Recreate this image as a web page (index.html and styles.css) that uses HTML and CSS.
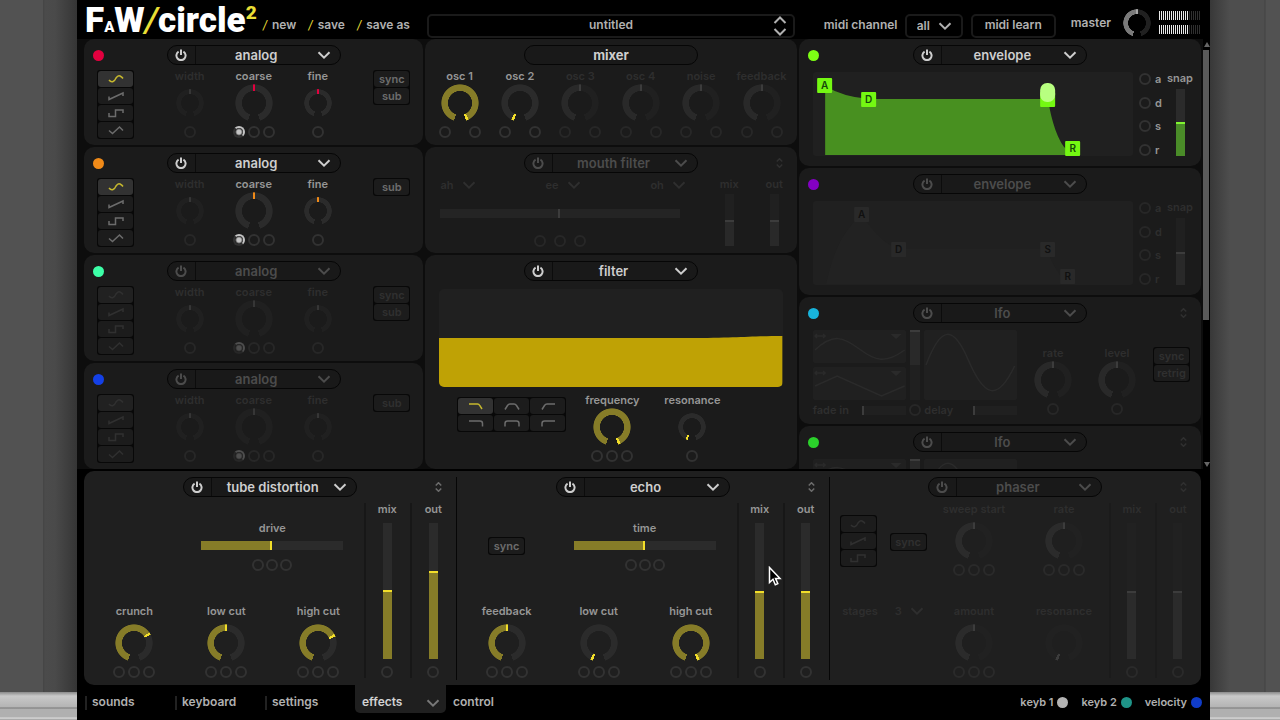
FILE: index.html
```html
<!DOCTYPE html>
<html lang="en">
<head>
    <meta charset="UTF-8">
    <meta name="viewport" content="width=device-width, initial-scale=1.0">
    <title>FAW / circle2</title>
    <link rel="stylesheet" href="styles.css">
</head>
<body>
    <!-- shared icons -->
    <svg class="sprite" aria-hidden="true">
        <symbol id="power" viewBox="0 0 12 12"><path d="M3.6 2.6a4.6 4.6 0 1 0 4.8 0M6 0.5v5.5"/></symbol>
        <symbol id="chevron" viewBox="0 0 14 8"><path d="M1.5 1.2L7 6.6l5.5-5.4"/></symbol>
        <symbol id="updown" viewBox="0 0 14 20"><path d="M1.5 7L7 1.5 12.5 7M1.5 13L7 18.5 12.5 13"/></symbol>
        <symbol id="sine" viewBox="0 0 16 10"><path d="M1 6q2 2.500 4 1.500t3-3.500q2-3 4-2t3 2.500"/></symbol>
        <symbol id="saw" viewBox="0 0 16 10"><path d="M1 5.500v3L15 2v3"/></symbol>
        <symbol id="square" viewBox="0 0 16 10"><path d="M1 5v3.500h6.500V2H15v3"/></symbol>
        <symbol id="tri" viewBox="0 0 16 10"><path d="M1 5.500L4.500 8.500 11.500 2 15 5.500"/></symbol>
        <symbol id="lp" viewBox="0 0 16 10"><path d="M1 3h8.500q1.500 0 2.200 1.500L14 8"/></symbol>
        <symbol id="bp" viewBox="0 0 16 10"><path d="M1 8.500l2.500-4Q4.500 3 6 3h4q1.500 0 2.500 1.500l2.500 4"/></symbol>
        <symbol id="hp" viewBox="0 0 16 10"><path d="M2 8.500l2.500-4Q5.500 3 7 3h8"/></symbol>
        <symbol id="lp4" viewBox="0 0 16 10"><path d="M1 3h11q2.500 0 2.500 2.500v3"/></symbol>
        <symbol id="bp4" viewBox="0 0 16 10"><path d="M1 8.500v-3Q1 3 3.500 3h9q2.500 0 2.500 2.500v3"/></symbol>
        <symbol id="hp4" viewBox="0 0 16 10"><path d="M2 8.500v-3Q2 3 4.500 3H15"/></symbol>
    </svg>

    <div class="window">
        <header class="topbar">
            <div class="brand">
                <h1 class="logo">F<span class="logo-a">A</span>W<i>/</i>circle<sup>2</sup></h1>
                <nav class="file-menu">
                    <a href="#new"><i>/</i>new</a>
                    <a href="#save"><i>/</i>save</a>
                    <a href="#save-as"><i>/</i>save as</a>
                </nav>
            </div>
            <div class="preset">
                <select aria-label="preset"><option>untitled</option></select>
                <svg class="preset-arrows"><use href="#updown"/></svg>
            </div>
            <div class="midi">
                <label class="midi-label" for="midi-channel">midi channel</label>
                <div class="box channel">
                    <select id="midi-channel"><option>all</option></select>
                    <svg class="chevron"><use href="#chevron"/></svg>
                </div>
                <button class="box">midi learn</button>
                <label class="master">master <input type="range" class="dial small grey" value="50" style="--v: 50"></label>
                <div class="meters">
                    <div class="meter" style="--v: 69"></div>
                    <div class="meter" style="--v: 69"></div>
                </div>
            </div>
        </header>

        <main class="rack">
            <div class="column">
                <section class="panel osc" style="--accent: #e3003f">
                    <div class="panel-head">
                        <span class="dot"></span>
                        <div class="pill">
                            <button class="power" aria-label="power"><svg><use href="#power"/></svg></button>
                            <select aria-label="oscillator 1 type"><option>analog</option></select>
                            <svg class="chevron"><use href="#chevron"/></svg>
                        </div>
                    </div>
                    <div class="osc-body">
                        <div class="cells">
                            <button class="cell on" aria-label="sine"><svg><use href="#sine"/></svg></button>
                            <button class="cell" aria-label="saw"><svg><use href="#saw"/></svg></button>
                            <button class="cell" aria-label="square"><svg><use href="#square"/></svg></button>
                            <button class="cell" aria-label="triangle"><svg><use href="#tri"/></svg></button>
                        </div>
                        <div class="knobs">
                            <div class="knob off"><label>width<input type="range" class="dial small bipolar" value="50" style="--v: 50"></label>
                                <div class="slots"><button class="slot"></button></div></div>
                            <div class="knob"><label>coarse<input type="range" class="dial bipolar" value="50" style="--v: 50"></label>
                                <div class="slots"><button class="slot linked"></button><button class="slot"></button><button class="slot"></button></div></div>
                            <div class="knob"><label>fine<input type="range" class="dial small bipolar" value="50" style="--v: 50"></label>
                                <div class="slots"><button class="slot"></button></div></div>
                        </div>
                        <div class="cells"><button class="cell">sync</button><button class="cell">sub</button></div>
                    </div>
                </section>

                <section class="panel osc" style="--accent: #f08a18">
                    <div class="panel-head">
                        <span class="dot"></span>
                        <div class="pill">
                            <button class="power" aria-label="power"><svg><use href="#power"/></svg></button>
                            <select aria-label="oscillator 2 type"><option>analog</option></select>
                            <svg class="chevron"><use href="#chevron"/></svg>
                        </div>
                    </div>
                    <div class="osc-body">
                        <div class="cells">
                            <button class="cell on" aria-label="sine"><svg><use href="#sine"/></svg></button>
                            <button class="cell" aria-label="saw"><svg><use href="#saw"/></svg></button>
                            <button class="cell" aria-label="square"><svg><use href="#square"/></svg></button>
                            <button class="cell" aria-label="triangle"><svg><use href="#tri"/></svg></button>
                        </div>
                        <div class="knobs">
                            <div class="knob off"><label>width<input type="range" class="dial small bipolar" value="50" style="--v: 50"></label>
                                <div class="slots"><button class="slot"></button></div></div>
                            <div class="knob"><label>coarse<input type="range" class="dial bipolar" value="50" style="--v: 50"></label>
                                <div class="slots"><button class="slot linked"></button><button class="slot"></button><button class="slot"></button></div></div>
                            <div class="knob"><label>fine<input type="range" class="dial small bipolar" value="50" style="--v: 50"></label>
                                <div class="slots"><button class="slot"></button></div></div>
                        </div>
                        <div class="cells"><button class="cell">sub</button></div>
                    </div>
                </section>

                <section class="panel osc off" style="--accent: #3dffa8">
                    <div class="panel-head">
                        <span class="dot"></span>
                        <div class="pill">
                            <button class="power" aria-label="power"><svg><use href="#power"/></svg></button>
                            <select aria-label="oscillator 3 type"><option>analog</option></select>
                            <svg class="chevron"><use href="#chevron"/></svg>
                        </div>
                    </div>
                    <div class="osc-body">
                        <div class="cells">
                            <button class="cell on" aria-label="sine"><svg><use href="#sine"/></svg></button>
                            <button class="cell" aria-label="saw"><svg><use href="#saw"/></svg></button>
                            <button class="cell" aria-label="square"><svg><use href="#square"/></svg></button>
                            <button class="cell" aria-label="triangle"><svg><use href="#tri"/></svg></button>
                        </div>
                        <div class="knobs">
                            <div class="knob"><label>width<input type="range" class="dial small bipolar" value="50" style="--v: 50"></label>
                                <div class="slots"><button class="slot"></button></div></div>
                            <div class="knob"><label>coarse<input type="range" class="dial bipolar" value="50" style="--v: 50"></label>
                                <div class="slots"><button class="slot linked"></button><button class="slot"></button><button class="slot"></button></div></div>
                            <div class="knob"><label>fine<input type="range" class="dial small bipolar" value="50" style="--v: 50"></label>
                                <div class="slots"><button class="slot"></button></div></div>
                        </div>
                        <div class="cells"><button class="cell">sync</button><button class="cell">sub</button></div>
                    </div>
                </section>

                <section class="panel osc off" style="--accent: #1440e6">
                    <div class="panel-head">
                        <span class="dot"></span>
                        <div class="pill">
                            <button class="power" aria-label="power"><svg><use href="#power"/></svg></button>
                            <select aria-label="oscillator 4 type"><option>analog</option></select>
                            <svg class="chevron"><use href="#chevron"/></svg>
                        </div>
                    </div>
                    <div class="osc-body">
                        <div class="cells">
                            <button class="cell on" aria-label="sine"><svg><use href="#sine"/></svg></button>
                            <button class="cell" aria-label="saw"><svg><use href="#saw"/></svg></button>
                            <button class="cell" aria-label="square"><svg><use href="#square"/></svg></button>
                            <button class="cell" aria-label="triangle"><svg><use href="#tri"/></svg></button>
                        </div>
                        <div class="knobs">
                            <div class="knob"><label>width<input type="range" class="dial small bipolar" value="50" style="--v: 50"></label>
                                <div class="slots"><button class="slot"></button></div></div>
                            <div class="knob"><label>coarse<input type="range" class="dial bipolar" value="50" style="--v: 50"></label>
                                <div class="slots"><button class="slot linked"></button><button class="slot"></button><button class="slot"></button></div></div>
                            <div class="knob"><label>fine<input type="range" class="dial small bipolar" value="50" style="--v: 50"></label>
                                <div class="slots"><button class="slot"></button></div></div>
                        </div>
                        <div class="cells"><button class="cell">sub</button></div>
                    </div>
                </section>
            </div>

            <div class="column">
                <section class="panel">
                    <div class="panel-head"><h2 class="pill">mixer</h2></div>
                    <div class="mixer-body">
                        <div class="knob"><label>osc 1<input type="range" class="dial" value="100" style="--v: 100"></label>
                            <div class="slots wide"><button class="slot"></button><button class="slot"></button></div></div>
                        <div class="knob"><label>osc 2<input type="range" class="dial" value="0" style="--v: 0"></label>
                            <div class="slots wide"><button class="slot"></button><button class="slot"></button></div></div>
                        <div class="knob off"><label>osc 3<input type="range" class="dial" value="50" style="--v: 50"></label>
                            <div class="slots wide"><button class="slot"></button><button class="slot"></button></div></div>
                        <div class="knob off"><label>osc 4<input type="range" class="dial" value="50" style="--v: 50"></label>
                            <div class="slots wide"><button class="slot"></button><button class="slot"></button></div></div>
                        <div class="knob off"><label>noise<input type="range" class="dial" value="50" style="--v: 50"></label>
                            <div class="slots wide"><button class="slot"></button><button class="slot"></button></div></div>
                        <div class="knob off"><label>feedback<input type="range" class="dial" value="50" style="--v: 50"></label>
                            <div class="slots wide"><button class="slot"></button><button class="slot"></button></div></div>
                    </div>
                </section>

                <section class="panel off">
                    <div class="panel-head">
                        <div class="pill">
                            <button class="power" aria-label="power"><svg><use href="#power"/></svg></button>
                            <select aria-label="slot module"><option>mouth filter</option></select>
                            <svg class="chevron"><use href="#chevron"/></svg>
                        </div>
                        <button class="step" aria-label="previous or next"><svg><use href="#updown"/></svg></button>
                    </div>
                    <div class="mouth-body">
                        <div class="mouth-main">
                            <div class="vowels">
                                <div class="pick"><select aria-label="vowel 1"><option>ah</option></select><svg class="chevron"><use href="#chevron"/></svg></div>
                                <div class="pick"><select aria-label="vowel 2"><option>ee</option></select><svg class="chevron"><use href="#chevron"/></svg></div>
                                <div class="pick"><select aria-label="vowel 3"><option>oh</option></select><svg class="chevron"><use href="#chevron"/></svg></div>
                            </div>
                            <input type="range" class="bar plain" aria-label="vowel position" value="50" style="--v: 50">
                            <div class="slots spaced"><button class="slot"></button><button class="slot"></button><button class="slot"></button></div>
                        </div>
                        <label class="fader">mix<input type="range" class="vbar" value="50" style="--v: 50"></label>
                        <label class="fader">out<input type="range" class="vbar" value="50" style="--v: 50"></label>
                    </div>
                </section>

                <section class="panel grow">
                    <div class="panel-head">
                        <div class="pill">
                            <button class="power" aria-label="power"><svg><use href="#power"/></svg></button>
                            <select aria-label="filter module"><option>filter</option></select>
                            <svg class="chevron"><use href="#chevron"/></svg>
                        </div>
                    </div>
                    <div class="filter-body">
                        <svg class="response" viewBox="0 0 345 98" preserveAspectRatio="none">
                            <path d="M0 49H250C300 49 310 47 345 47V98H0z"/>
                        </svg>
                        <div class="filter-controls">
                            <div class="cells filter-types">
                                <button class="cell on" aria-label="low pass 12"><svg><use href="#lp"/></svg></button>
                                <button class="cell" aria-label="band pass 12"><svg><use href="#bp"/></svg></button>
                                <button class="cell" aria-label="high pass 12"><svg><use href="#hp"/></svg></button>
                                <button class="cell" aria-label="low pass 24"><svg><use href="#lp4"/></svg></button>
                                <button class="cell" aria-label="band pass 24"><svg><use href="#bp4"/></svg></button>
                                <button class="cell" aria-label="high pass 24"><svg><use href="#hp4"/></svg></button>
                            </div>
                            <div class="knob"><label>frequency<input type="range" class="dial" value="100" style="--v: 100"></label>
                                <div class="slots"><button class="slot"></button><button class="slot"></button><button class="slot"></button></div></div>
                            <div class="knob"><label>resonance<input type="range" class="dial small" value="0" style="--v: 0"></label>
                                <div class="slots"><button class="slot"></button></div></div>
                        </div>
                    </div>
                </section>
            </div>

            <div class="column modulators">
                <section class="panel mod" style="--accent: #7dff14">
                    <div class="panel-head">
                        <span class="dot"></span>
                        <div class="pill">
                            <button class="power" aria-label="power"><svg><use href="#power"/></svg></button>
                            <select aria-label="modulator 1 type"><option>envelope</option></select>
                            <svg class="chevron"><use href="#chevron"/></svg>
                        </div>
                    </div>
                    <div class="env-body">
                        <svg class="env-graph" viewBox="0 0 320 84">
                            <path class="env-area" d="M12 14Q30 25 56 27H235C238 50 246 70 252 76L259 83H12z"/>
                            <rect class="handle" x="4" y="6" width="15" height="15" rx="1"/><text x="11.5" y="17">A</text>
                            <rect class="handle" x="48" y="20" width="15" height="15" rx="1"/><text x="55.5" y="31">D</text>
                            <rect class="handle" x="227" y="20" width="15" height="15" rx="1"/>
                            <rect class="glow" x="227" y="11" width="15" height="19" rx="7"/>
                            <rect class="handle" x="252" y="69" width="15" height="15" rx="1"/><text x="259.5" y="80">R</text>
                        </svg>
                        <div class="stages">
                            <label><button class="slot"></button>a</label>
                            <label><button class="slot"></button>d</label>
                            <label><button class="slot"></button>s</label>
                            <label><button class="slot"></button>r</label>
                        </div>
                        <label class="fader snap">snap<input type="range" class="vbar" value="51" style="--v: 51"></label>
                    </div>
                </section>

                <section class="panel mod off" style="--accent: #8400c4">
                    <div class="panel-head">
                        <span class="dot"></span>
                        <div class="pill">
                            <button class="power" aria-label="power"><svg><use href="#power"/></svg></button>
                            <select aria-label="modulator 2 type"><option>envelope</option></select>
                            <svg class="chevron"><use href="#chevron"/></svg>
                        </div>
                    </div>
                    <div class="env-body">
                        <svg class="env-graph" viewBox="0 0 320 84">
                            <path class="env-area" d="M13 83C20 50 30 30 48 14 58 26 68 42 85 48H234Q240 68 254 83z"/>
                            <rect class="handle" x="41" y="6" width="15" height="15" rx="1"/><text x="48.5" y="17">A</text>
                            <rect class="handle" x="78" y="41" width="15" height="15" rx="1"/><text x="85.5" y="52">D</text>
                            <rect class="handle" x="227" y="41" width="15" height="15" rx="1"/><text x="234.5" y="52">S</text>
                            <rect class="handle" x="247" y="68" width="15" height="15" rx="1"/><text x="254.5" y="79">R</text>
                        </svg>
                        <div class="stages">
                            <label><button class="slot"></button>a</label>
                            <label><button class="slot"></button>d</label>
                            <label><button class="slot"></button>s</label>
                            <label><button class="slot"></button>r</label>
                        </div>
                        <label class="fader snap">snap<input type="range" class="vbar" value="50" style="--v: 50"></label>
                    </div>
                </section>

                <section class="panel mod off" style="--accent: #18b4dc">
                    <div class="panel-head">
                        <span class="dot"></span>
                        <div class="pill">
                            <button class="power" aria-label="power"><svg><use href="#power"/></svg></button>
                            <select aria-label="modulator 3 type"><option>lfo</option></select>
                            <svg class="chevron"><use href="#chevron"/></svg>
                        </div>
                        <button class="step" aria-label="previous or next"><svg><use href="#updown"/></svg></button>
                    </div>
                    <div class="lfo-body">
                        <div class="lfo-waves">
                            <div class="wave-pair">
                                <svg viewBox="0 0 93 33" preserveAspectRatio="none"><path d="M2 20C20 3 30 7 46 19S72 34 91 20M2 6h10M4 4L2 6l2 2M10 4l2 2-2 2"/><path class="solid" d="M77 4h11l-5.5 5z"/></svg>
                                <svg viewBox="0 0 93 33" preserveAspectRatio="none"><path d="M2 19L24 9 68 29 91 19M2 6h10M4 4L2 6l2 2M10 4l2 2-2 2"/><path class="solid" d="M77 4h11l-5.5 5z"/></svg>
                            </div>
                            <input type="range" class="vbar down" aria-label="wave blend" value="50" style="--v: 50">
                            <svg class="lfo-shape" viewBox="0 0 92 70" preserveAspectRatio="none"><path d="M2 35C17-5 29-5 44 30S72 74 90 36"/></svg>
                            <label class="lfo-bar">fade in<input type="range" class="bar" value="4" style="--v: 4"></label>
                            <button class="slot" aria-label="fade modulation"></button>
                            <label class="lfo-bar">delay<input type="range" class="bar" value="4" style="--v: 4"></label>
                        </div>
                        <div class="knob"><label>rate<input type="range" class="dial" value="50" style="--v: 50"></label>
                            <div class="slots"><button class="slot"></button></div></div>
                        <div class="knob"><label>level<input type="range" class="dial" value="50" style="--v: 50"></label>
                            <div class="slots"><button class="slot"></button></div></div>
                        <div class="cells"><button class="cell">sync</button><button class="cell">retrig</button></div>
                    </div>
                </section>

                <section class="panel mod off" style="--accent: #2bd12b">
                    <div class="panel-head">
                        <span class="dot"></span>
                        <div class="pill">
                            <button class="power" aria-label="power"><svg><use href="#power"/></svg></button>
                            <select aria-label="modulator 4 type"><option>lfo</option></select>
                            <svg class="chevron"><use href="#chevron"/></svg>
                        </div>
                        <button class="step" aria-label="previous or next"><svg><use href="#updown"/></svg></button>
                    </div>
                    <div class="lfo-body collapsed">
                        <div class="lfo-waves">
                            <div class="wave-pair">
                                <svg viewBox="0 0 93 33" preserveAspectRatio="none"><path d="M2 20C20 3 30 7 46 19S72 34 91 20M2 6h10M4 4L2 6l2 2M10 4l2 2-2 2"/><path class="solid" d="M77 4h11l-5.5 5z"/></svg>
                                <svg viewBox="0 0 93 33" preserveAspectRatio="none"><path d="M2 19L24 9 68 29 91 19"/></svg>
                            </div>
                            <input type="range" class="vbar down" aria-label="wave blend" value="50" style="--v: 50">
                            <svg class="lfo-shape" viewBox="0 0 92 70" preserveAspectRatio="none"><path d="M2 35C17-5 29-5 44 30S72 74 90 36"/></svg>
                        </div>
                    </div>
                </section>
            </div>

            <div class="scrollbar">
                <svg viewBox="0 0 6 5"><path d="M3 0l3 5H0z"/></svg>
                <div class="scroll-track"><div class="scroll-thumb" style="height: 66%"></div></div>
                <svg viewBox="0 0 6 5"><path d="M0 0h6L3 5z"/></svg>
            </div>
        </main>

        <section class="effects">
            <div class="effect">
                <div class="panel-head">
                    <div class="pill">
                        <button class="power" aria-label="power"><svg><use href="#power"/></svg></button>
                        <select aria-label="effect 1"><option>tube distortion</option></select>
                        <svg class="chevron"><use href="#chevron"/></svg>
                    </div>
                    <button class="step" aria-label="previous or next"><svg><use href="#updown"/></svg></button>
                </div>
                <div class="effect-body">
                    <div class="effect-main">
                        <div class="effect-slider">
                            <label>drive<input type="range" class="bar" value="50" style="--v: 50"></label>
                            <div class="slots"><button class="slot"></button><button class="slot"></button><button class="slot"></button></div>
                        </div>
                        <div class="knob first"><label>crunch<input type="range" class="dial" value="69" style="--v: 69"></label>
                            <div class="slots"><button class="slot"></button><button class="slot"></button><button class="slot"></button></div></div>
                        <div class="knob"><label>low cut<input type="range" class="dial" value="50" style="--v: 50"></label>
                            <div class="slots"><button class="slot"></button><button class="slot"></button><button class="slot"></button></div></div>
                        <div class="knob"><label>high cut<input type="range" class="dial" value="71" style="--v: 71"></label>
                            <div class="slots"><button class="slot"></button><button class="slot"></button><button class="slot"></button></div></div>
                    </div>
                    <div class="effect-fader"><label class="fader">mix<input type="range" class="vbar" value="51" style="--v: 51"></label><button class="slot"></button></div>
                    <div class="effect-fader"><label class="fader">out<input type="range" class="vbar" value="65" style="--v: 65"></label><button class="slot"></button></div>
                </div>
            </div>

            <div class="effect">
                <div class="panel-head">
                    <div class="pill">
                        <button class="power" aria-label="power"><svg><use href="#power"/></svg></button>
                        <select aria-label="effect 2"><option>echo</option></select>
                        <svg class="chevron"><use href="#chevron"/></svg>
                    </div>
                    <button class="step" aria-label="previous or next"><svg><use href="#updown"/></svg></button>
                </div>
                <div class="effect-body">
                    <div class="effect-main">
                        <div class="cells"><button class="cell">sync</button></div>
                        <div class="effect-slider">
                            <label>time<input type="range" class="bar" value="50" style="--v: 50"></label>
                            <div class="slots"><button class="slot"></button><button class="slot"></button><button class="slot"></button></div>
                        </div>
                        <div class="knob first"><label>feedback<input type="range" class="dial" value="50" style="--v: 50"></label>
                            <div class="slots"><button class="slot"></button><button class="slot"></button><button class="slot"></button></div></div>
                        <div class="knob"><label>low cut<input type="range" class="dial" value="0" style="--v: 0"></label>
                            <div class="slots"><button class="slot"></button><button class="slot"></button><button class="slot"></button></div></div>
                        <div class="knob"><label>high cut<input type="range" class="dial" value="100" style="--v: 100"></label>
                            <div class="slots"><button class="slot"></button><button class="slot"></button><button class="slot"></button></div></div>
                    </div>
                    <div class="effect-fader"><label class="fader">mix<input type="range" class="vbar" value="50" style="--v: 50"></label><button class="slot"></button></div>
                    <div class="effect-fader"><label class="fader">out<input type="range" class="vbar" value="50" style="--v: 50"></label><button class="slot"></button></div>
                </div>
            </div>

            <div class="effect off">
                <div class="panel-head">
                    <div class="pill">
                        <button class="power" aria-label="power"><svg><use href="#power"/></svg></button>
                        <select aria-label="effect 3"><option>phaser</option></select>
                        <svg class="chevron"><use href="#chevron"/></svg>
                    </div>
                    <button class="step" aria-label="previous or next"><svg><use href="#updown"/></svg></button>
                </div>
                <div class="effect-body">
                    <div class="effect-main phaser">
                        <div class="phaser-switches">
                            <div class="cells">
                                <button class="cell" aria-label="sine"><svg><use href="#sine"/></svg></button>
                                <button class="cell" aria-label="saw"><svg><use href="#saw"/></svg></button>
                                <button class="cell" aria-label="square"><svg><use href="#square"/></svg></button>
                            </div>
                            <div class="cells"><button class="cell">sync</button></div>
                        </div>
                        <div class="knob"><label>sweep start<input type="range" class="dial" value="50" style="--v: 50"></label>
                            <div class="slots"><button class="slot"></button><button class="slot"></button><button class="slot"></button></div></div>
                        <div class="knob"><label>rate<input type="range" class="dial" value="50" style="--v: 50"></label>
                            <div class="slots"><button class="slot"></button><button class="slot"></button><button class="slot"></button></div></div>
                        <div class="phaser-stages">
                            <label for="stages">stages</label>
                            <div class="pick"><select id="stages"><option>3</option></select><svg class="chevron"><use href="#chevron"/></svg></div>
                        </div>
                        <div class="knob"><label>amount<input type="range" class="dial" value="50" style="--v: 50"></label>
                            <div class="slots"><button class="slot"></button><button class="slot"></button><button class="slot"></button></div></div>
                        <div class="knob"><label>resonance<input type="range" class="dial" value="0" style="--v: 0"></label></div>
                    </div>
                    <div class="effect-fader"><label class="fader">mix<input type="range" class="vbar" value="50" style="--v: 50"></label><button class="slot"></button></div>
                    <div class="effect-fader"><label class="fader">out<input type="range" class="vbar" value="50" style="--v: 50"></label><button class="slot"></button></div>
                </div>
            </div>
        </section>

        <footer class="bottombar">
            <nav class="tabs">
                <a href="#sounds">sounds</a>
                <a href="#keyboard">keyboard</a>
                <a href="#settings">settings</a>
                <a href="#effects" class="active">effects <svg class="chevron"><use href="#chevron"/></svg></a>
                <a href="#control">control</a>
            </nav>
            <div class="sources">
                <span>keyb 1 <b class="dot" style="--accent: #b4b4b4"></b></span>
                <span>keyb 2 <b class="dot" style="--accent: #1f9488"></b></span>
                <span>velocity <b class="dot" style="--accent: #103cc8"></b></span>
            </div>
        </footer>

        <svg class="cursor" viewBox="0 0 14 20"><path d="M1.5 1.5v15l3.5-3.2 2.3 5.4 2.5-1.1-2.3-5.2H12z"/></svg>
    </div>
</body>
</html>
```
FILE: styles.css
```css
* {
    box-sizing: border-box;
}
body {
    --title: #cecece;
    --text: #969696;
    --ring: #323232;
    --track: #2b2b2b;
    --fill: #867c28;
    --mark: #f2de2a;
    --icon: #6c6c6c;
    --link: #c4c4c4;
    margin: 0;
    padding: 0 70px 0 77px;
    min-height: 100vh;
    font: 600 11px/12px Inter, "Liberation Sans", sans-serif;
    color: var(--text);
    background:
        linear-gradient(#8a8a8a, #c9c9c9 4px, #b4b4b4 15px, #777 16px, #b0b0b0 17px, #b0b0b0 25px, #ddd 26px, #999) bottom / 100% 28px no-repeat,
        linear-gradient(to right, #525252 43px, #444 43px, #4b4b4b 45px, #4a4a4a 55px, #353535 77px, #353535 50%, #383838 calc(100% - 70px), #4e4e4e calc(100% - 50px), #4e4e4e calc(100% - 16px), #424242 calc(100% - 15px), #525252 calc(100% - 14px));
}
.sprite {
    position: absolute;
    width: 0;
    height: 0;
}
svg {
    display: block;
    fill: none;
    stroke: currentColor;
    stroke-width: 1.5;
}
h1, h2 {
    margin: 0;
    font-weight: bold;
}
button, select, input {
    appearance: none;
    margin: 0;
    padding: 0;
    border: 0;
    border-radius: 0;
    background: none;
    color: inherit;
    font: inherit;
    outline: none;
}
a {
    color: inherit;
    text-decoration: none;
}

.window {
    position: relative;
    display: flex;
    flex-direction: column;
    min-height: 100vh;
    background: #000;
}

/* switched-off modules and controls */
.off {
    --title: #4c4c4c;
    --text: #2e2e2e;
    --ring: #272727;
    --track: #202020;
    --fill: #292929;
    --mark: #3c3c3c;
    --icon: #303030;
    --link: #4e4e4e;
    color: var(--text);
}

/* ---- top bar ---- */
.topbar {
    display: grid;
    grid-template-columns: 340fr 372fr 403fr;
    gap: 2px;
    align-items: center;
    height: 39px;
    padding: 0 9px 0 7px;
    font-size: 12px;
    color: #b0b0b0;
}
.brand {
    display: flex;
    align-items: center;
}
.logo {
    display: flex;
    align-items: baseline;
    margin: 3px 0 0 1px;
    font: 900 35px/36px Roboto, sans-serif;
    color: #fff;
}
.logo i, .logo sup {
    color: #e9de35;
}
.logo i {
    font-weight: 500;
}
.logo-a {
    font-size: 15px;
}
.logo sup {
    align-self: flex-start;
    font-size: 19px;
    line-height: 20px;
}
.file-menu {
    display: flex;
    gap: 12px;
    padding-top: 5px;
    margin-left: 6px;
    white-space: nowrap;
}
.file-menu i {
    margin-right: 5px;
    font-weight: 400;
    color: #e9de35;
}
.preset, .box {
    display: flex;
    align-items: center;
    height: 24px;
    border: 2px solid #1a1a1a;
    border-radius: 5px;
}
.preset {
    margin: 6px 2px 0;
}
.preset select {
    flex: 1;
    padding: 0 0 2px 20px;
    text-align-last: center;
}
.preset-arrows {
    width: 14px;
    height: 20px;
    margin-right: 6px;
    stroke-width: 2;
    color: #b0b0b0;
}
.midi {
    display: flex;
    align-items: center;
    padding: 4px 0 0 25px;
    white-space: nowrap;
}
.midi-label {
    flex: 1;
}
.box {
    margin: 2px 8px 0 0;
    padding: 0 12px 1px;
}
.channel {
    padding: 0 9px 0 10px;
}
.channel .chevron {
    margin-left: 7px;
}
.master {
    display: flex;
    align-items: center;
    gap: 12px;
    margin: -4px 8px 0 7px;
}
.grey {
    --fill: #7a7a7a;
    --mark: #a8a8a8;
    --track: #202020;
}
.meters {
    display: grid;
    gap: 5px;
    width: 42px;
    margin-top: -5px;
}
.meter {
    height: 9px;
    background:
        repeating-linear-gradient(to right, transparent 0 1px, #000 1px 2px),
        linear-gradient(to right, #e8e8e8 calc(var(--v) * 1%), #303030 0);
}

/* ---- panels ---- */
.rack {
    display: grid;
    grid-template-columns: 340fr 372fr 403fr 7px;
    gap: 2px;
    height: 430px;
    padding-left: 7px;
    background: #0d0d0d;
}
.column {
    display: flex;
    flex-direction: column;
    gap: 2px;
    min-width: 0;
}
.modulators {
    overflow: hidden;
}
.panel {
    height: 106px;
    flex: none;
    padding-top: 6px;
    border-radius: 10px;
    background: #1b1b1b;
}
.grow {
    flex: 1;
}
.mod {
    height: 127px;
}
.panel-head {
    display: grid;
    grid-template-columns: 1fr 174px 1fr;
    align-items: center;
    height: 20px;
}
.dot {
    width: 11px;
    height: 11px;
    margin-left: 9px;
    border-radius: 50%;
    background: var(--accent);
}
.pill {
    grid-column: 2;
    display: flex;
    align-items: center;
    justify-content: center;
    height: 20px;
    border: 1px solid #060606;
    border-radius: 10px;
    background: #191919;
    font-size: 13px;
    line-height: 16px;
    color: var(--title);
}
.pill select {
    flex: 1;
    text-align-last: center;
}
.pill .chevron {
    margin-right: 9px;
}
.power {
    width: 28px;
    height: 18px;
    padding-left: 7px;
    border-right: 1px solid #0c0c0c;
}
.power svg {
    width: 12px;
    height: 12px;
    stroke-width: 2;
}
.chevron {
    flex: none;
    width: 14px;
    height: 8px;
    stroke-width: 2;
}
.step {
    justify-self: end;
    margin-right: 14px;
    color: var(--icon);
}
.step svg {
    width: 7px;
    height: 10px;
    stroke-width: 3;
}

/* ---- controls ---- */
.cells {
    display: grid;
    gap: 1px;
    width: 37px;
    align-self: start;
    padding: 1px;
    border-radius: 3px;
    background: #080808;
}
.cell {
    display: grid;
    place-items: center;
    height: 16px;
    border-radius: 3px;
    background: #1c1c1c;
    color: var(--icon);
}
.cell svg {
    width: 16px;
    height: 10px;
}
.cell.on {
    background: #323232;
    color: #c6b82e;
}
.off .cell.on {
    background: #212121;
    color: var(--icon);
}
.knob {
    display: grid;
    justify-items: center;
    gap: 4px;
    align-content: start;
    width: 64px;
}
.knob label {
    display: grid;
    justify-items: center;
    align-items: center;
    grid-template-rows: 12px 38px;
    gap: 2px;
    white-space: nowrap;
}
.dial {
    width: 38px;
    height: 38px;
    background: conic-gradient(from 199deg,
        var(--fill) calc(var(--v) * 3.13deg),
        var(--mark) 0 calc(var(--v) * 3.13deg + 9deg),
        var(--track) 0 322deg, transparent 0);
    mask: radial-gradient(closest-side, transparent 62%, #000 65% 96%, transparent);
}
.dial.small {
    width: 28px;
    height: 28px;
}
.bipolar {
    --fill: var(--track);
    --mark: var(--accent);
}
.off .bipolar {
    --mark: #363636;
}
input::-webkit-slider-thumb {
    appearance: none;
    width: 1px;
    height: 1px;
    opacity: 0;
}
.slots {
    display: flex;
    justify-content: center;
    gap: 3px;
}
.slots.wide {
    gap: 18px;
}
.slots.spaced {
    gap: 8px;
}
.slot {
    flex: none;
    width: 12px;
    height: 12px;
    border: 2px solid var(--ring);
    border-radius: 50%;
}
.slot.linked {
    border-color: var(--ring);
    border-right-color: var(--link);
    border-top-color: var(--link);
    background: radial-gradient(circle, var(--link) 2px, transparent 4px) padding-box;
}
.bar {
    width: 100%;
    height: 9px;
    background: linear-gradient(to right,
        var(--fill) calc(var(--v) * 1% - 2px),
        var(--mark) 0 calc(var(--v) * 1%),
        var(--track) 0);
}
.bar.plain {
    --fill: #242424;
    --track: #242424;
}
.vbar {
    width: 9px;
    writing-mode: vertical-lr;
    direction: rtl;
    background: linear-gradient(to top,
        var(--fill) calc(var(--v) * 1% - 2px),
        var(--mark) 0 calc(var(--v) * 1%),
        var(--track) 0);
}
.fader {
    display: flex;
    flex-direction: column;
    align-items: center;
}
.fader .vbar {
    flex: 1;
    min-height: 0;
}
.pick {
    display: flex;
    align-items: center;
    gap: 8px;
}

/* ---- oscillators ---- */
.osc-body {
    display: flex;
    height: 70px;
    margin: 5px 13px 0;
}
.knobs {
    flex: 1;
    display: flex;
    justify-content: center;
}

/* ---- middle column ---- */
.mixer-body {
    display: grid;
    grid-template-columns: repeat(6, minmax(0, 1fr));
    margin: 5px 5px 0 4px;
}
.mixer-body .knob {
    width: auto;
}
.mouth-body {
    display: flex;
    margin: 5px 0 0 15px;
}
.mouth-main {
    flex: 1;
    min-width: 0;
    margin-right: 27px;
}
.vowels {
    display: grid;
    grid-template-columns: 105px 105px auto;
    margin-bottom: 18px;
    padding-top: 1px;
}
.mouth-main .bar {
    display: block;
}
.mouth-main .slots {
    margin-top: 17px;
}
.mouth-body .fader {
    flex: none;
    width: 45px;
    height: 68px;
}
.mouth-body .vbar {
    margin-top: 4px;
}
.filter-body {
    margin: 8px 14px 0;
}
.response {
    width: 100%;
    height: 98px;
    border-radius: 5px;
    background: #202020;
    fill: #bfa205;
    stroke: none;
}
.filter-controls {
    display: flex;
    padding: 7px 0 0 18px;
}
.filter-types {
    grid-template-columns: repeat(3, 1fr);
    width: 109px;
    margin: 3px 6px 0 0;
}
.filter-controls .knob {
    width: 80px;
}

/* ---- modulators ---- */
.env-body {
    display: flex;
    height: 84px;
    margin: 7px 7px 0 14px;
}
.env-graph {
    flex: 1;
    min-width: 0;
    height: 84px;
    border-radius: 3px;
    background: #202020;
    stroke: none;
}
.env-area {
    fill: #489020;
}
.handle {
    fill: #74f812;
}
.glow {
    fill: #b8ff80;
}
.env-graph text {
    fill: #14480a;
    font-size: 10px;
    text-anchor: middle;
}
.off .env-area {
    fill: #222;
}
.off .handle {
    fill: #292929;
}
.off .env-graph text {
    fill: #101010;
}
.stages {
    display: flex;
    flex-direction: column;
    justify-content: space-between;
    width: 24px;
    margin: 1px 0 0 6px;
}
.stages label {
    display: flex;
    align-items: center;
    gap: 4px;
}
.snap {
    width: 28px;
    margin-left: 3px;
    --fill: #4a8c28;
    --mark: #80f530;
}
.off .snap {
    --fill: #292929;
    --mark: #3c3c3c;
}
.snap .vbar {
    margin-top: 5px;
}
.lfo-body {
    display: flex;
    margin: 7px 11px 0 14px;
}
.lfo-waves {
    display: grid;
    grid-template-columns: 93fr 10px 92fr;
    grid-template-rows: 70px 12px;
    gap: 4px;
    flex: 1;
    align-items: center;
    margin-right: 4px;
}
.lfo-waves svg {
    width: 100%;
    height: 33px;
    border-radius: 2px;
    background: #202020;
    color: #2a2a2a;
}
.wave-pair {
    display: grid;
    gap: 4px;
}
.solid {
    fill: #2a2a2a;
    stroke: none;
}
.lfo-waves .lfo-shape, .lfo-waves .vbar {
    height: 70px;
}
.vbar.down {
    width: 10px;
    background: linear-gradient(var(--mark) 2px, var(--fill) 0 50%, var(--track) 0);
}
.lfo-bar {
    display: grid;
    grid-template-columns: 1fr 44px;
    align-items: center;
    white-space: nowrap;
}
.lfo-bar + .slot {
    margin-left: -1px;
}
.lfo-body .knob, .lfo-body > .cells {
    margin-top: 17px;
}
.lfo-body > .cells {
    margin-left: 4px;
}
.collapsed .lfo-waves {
    margin-right: 173px;
}

/* ---- scroll bar ---- */
.scrollbar {
    display: flex;
    flex-direction: column;
    align-items: center;
    gap: 3px;
    padding: 3px 0 2px;
    background: #000;
}
.scrollbar svg {
    width: 6px;
    height: 5px;
    fill: #666;
    stroke: none;
}
.scroll-track {
    flex: 1;
    width: 100%;
}
.scroll-thumb {
    width: 6px;
    background: #5a5a5a;
}

/* ---- effects ---- */
.effects {
    display: grid;
    grid-template-columns: repeat(3, 1fr);
    height: 214px;
    margin: 2px 9px 0 7px;
    padding: 6px 0 5px;
    border-radius: 10px;
    background: #1f1f1f;
}
.effect + .effect {
    border-left: 1px solid #060606;
}
.effect.off {
    --track: #212121;
    --fill: #2b2b2b;
    --ring: #2a2a2a;
}
.effect-body {
    display: flex;
    height: 175px;
    margin-top: 6px;
}
.effect-main {
    flex: 1;
    display: grid;
    grid-template-columns: repeat(3, 92px);
    grid-template-rows: 102px auto;
    justify-content: end;
    justify-items: center;
}
.effect-main > .cells {
    margin-top: 34px;
}
.effect-slider {
    grid-column: 2 / span 2;
    width: 142px;
    padding-top: 19px;
}
.effect-slider label {
    display: grid;
    justify-items: center;
    gap: 7px;
}
.effect-slider .slots {
    margin-top: 9px;
    gap: 2px;
}
.first {
    grid-column: 1;
}
.effect .knob label {
    gap: 7px;
}
.effect-fader {
    display: flex;
    flex-direction: column;
    align-items: center;
    justify-content: space-between;
    width: 46px;
    padding-right: 2px;
    border-left: 2px solid #171717;
}
.effect.off .effect-fader {
    border-color: #1b1b1b;
}
.effect-fader .fader {
    height: 156px;
}
.effect-fader .vbar {
    margin-top: 8px;
}
.phaser {
    grid-template-columns: 92px 90px 90px;
}
.phaser-switches {
    display: flex;
    gap: 13px;
    padding-top: 12px;
}
.phaser-switches .cells + .cells {
    margin-top: 18px;
}
.phaser-stages {
    display: flex;
    gap: 17px;
    align-self: start;
}

/* ---- bottom bar ---- */
.bottombar {
    display: flex;
    justify-content: space-between;
    height: 35px;
    padding: 0 8px;
    font-size: 12px;
    color: #b0b0b0;
}
.tabs {
    display: flex;
}
.tabs a {
    width: 90px;
    height: 28px;
    padding: 11px 0 0 7px;
    background: linear-gradient(#222, #222) 0 11px / 2px 14px no-repeat;
}
.tabs .active {
    display: flex;
    justify-content: space-between;
    width: 91px;
    padding-right: 6px;
    border-radius: 0 0 5px 5px;
    background: #1f1f1f;
    color: #d2d2d2;
}
.tabs .active + a {
    background: none;
}
.active .chevron {
    margin-top: 3px;
    color: #777;
}
.sources {
    display: flex;
    gap: 13px;
    height: 34px;
    font-size: 11px;
}
.sources span {
    display: flex;
    align-items: center;
}
.sources .dot {
    margin-left: 4px;
}

.cursor {
    position: absolute;
    left: 691px;
    top: 566px;
    width: 14px;
    height: 20px;
    fill: #000;
    stroke: #fff;
}
```
